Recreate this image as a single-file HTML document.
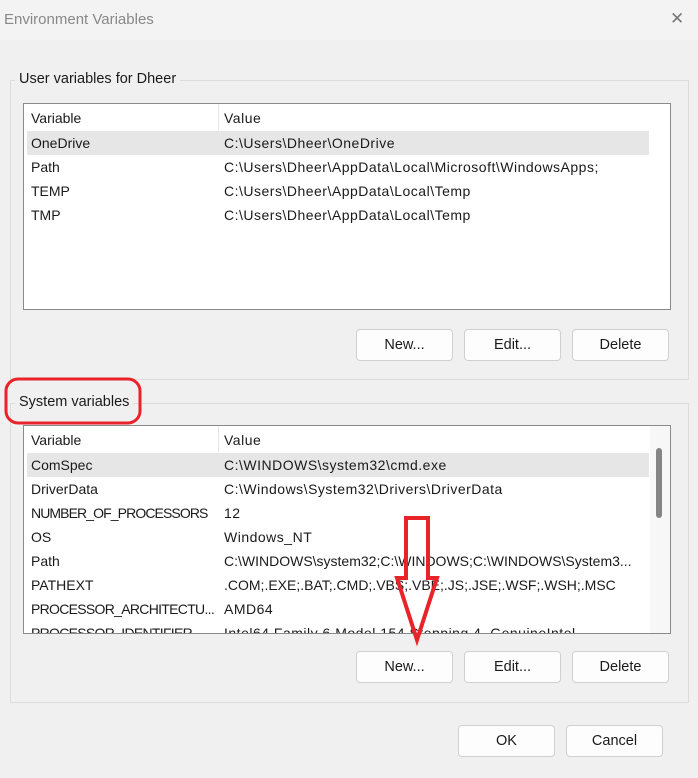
<!DOCTYPE html>
<html><head><style>
body{margin:0;width:698px;height:778px;background:#f0f0f0;font-family:"Liberation Sans",sans-serif;font-size:14px;color:#1a1a1a;position:relative;overflow:hidden}
.a{position:absolute}
.box{position:absolute;border:1px solid #dcdcdc}
.list{position:absolute;background:#fff;border:1px solid #8a8a8a;overflow:hidden}
.row{position:absolute;left:3px;height:24px;line-height:24px;width:622px}
.row span{position:absolute;top:0;height:24px;line-height:24px;white-space:nowrap;overflow:hidden}
.row .v{left:4px;width:186px}.row .w{left:197px;font-size:14px;letter-spacing:0.5px;width:425px}
.btn{position:absolute;width:95px;height:30px;background:#fdfdfd;border:1px solid #d0d0d0;border-radius:4px;text-align:center;line-height:30px;font-size:14.5px}
</style></head><body>
<div class="a" style="left:0;top:0;width:698px;height:40px;background:#f3f3f3"></div>
<div class="a" style="left:4px;top:11px;color:#888;font-size:15px">Environment Variables</div>
<div class="a" style="left:670px;top:9px;color:#777;font-size:17px">✕</div>

<div class="box" style="left:10px;top:80px;width:677px;height:298px"></div>
<div class="a" style="left:15px;top:71px;background:#f0f0f0;padding:0 4px;font-size:14.5px">User variables for Dheer</div>
<div class="list" style="left:23px;top:103px;width:646px;height:205px">
<div class="a" style="left:194px;top:0;width:1px;height:26px;background:#e5e5e5"></div>
<div class="row" style="top:2px"><span class="v">Variable</span><span class="w">Value</span></div>
<div class="row" style="top:27px;background:#e6e6e6"><span class="v">OneDrive</span><span class="w">C:\Users\Dheer\OneDrive</span></div>
<div class="row" style="top:51px"><span class="v">Path</span><span class="w">C:\Users\Dheer\AppData\Local\Microsoft\WindowsApps;</span></div>
<div class="row" style="top:75px"><span class="v">TEMP</span><span class="w">C:\Users\Dheer\AppData\Local\Temp</span></div>
<div class="row" style="top:99px"><span class="v">TMP</span><span class="w">C:\Users\Dheer\AppData\Local\Temp</span></div>
</div>
<div class="btn" style="left:356px;top:329px">New...</div>
<div class="btn" style="left:464px;top:329px">Edit...</div>
<div class="btn" style="left:572px;top:329px">Delete</div>

<div class="box" style="left:10px;top:403px;width:677px;height:298px"></div>
<div class="a" style="left:15px;top:394px;background:#f0f0f0;padding:0 4px;font-size:14.5px">System variables</div>
<div class="list" style="left:23px;top:425px;width:646px;height:207px">
<div class="a" style="left:194px;top:0;width:1px;height:26px;background:#e5e5e5"></div>
<div class="a" style="left:626px;top:0;width:20px;height:207px;background:#f7f7f7"></div>
<div class="a" style="left:632px;top:22px;width:6px;height:70px;background:#858585;border-radius:3px"></div>
<div class="row" style="top:2px"><span class="v">Variable</span><span class="w">Value</span></div>
<div class="row" style="top:27px;background:#e6e6e6"><span class="v">ComSpec</span><span class="w">C:\WINDOWS\system32\cmd.exe</span></div>
<div class="row" style="top:51px"><span class="v">DriverData</span><span class="w">C:\Windows\System32\Drivers\DriverData</span></div>
<div class="row" style="top:75px"><span class="v" style="letter-spacing:-0.9px">NUMBER_OF_PROCESSORS</span><span class="w">12</span></div>
<div class="row" style="top:99px"><span class="v">OS</span><span class="w">Windows_NT</span></div>
<div class="row" style="top:123px"><span class="v">Path</span><span class="w" style="letter-spacing:0">C:\WINDOWS\system32;C:\WINDOWS;C:\WINDOWS\System3...</span></div>
<div class="row" style="top:147px"><span class="v">PATHEXT</span><span class="w" style="letter-spacing:0">.COM;.EXE;.BAT;.CMD;.VBS;.VBE;.JS;.JSE;.WSF;.WSH;.MSC</span></div>
<div class="row" style="top:171px"><span class="v" style="letter-spacing:-0.7px">PROCESSOR_ARCHITECTU...</span><span class="w">AMD64</span></div>
<div class="row" style="top:195px"><span class="v" style="letter-spacing:-0.7px">PROCESSOR_IDENTIFIER</span><span class="w">Intel64 Family 6 Model 154 Stepping 4, GenuineIntel</span></div>
</div>
<div class="btn" style="left:356px;top:651px">New...</div>
<div class="btn" style="left:464px;top:651px">Edit...</div>
<div class="btn" style="left:572px;top:651px">Delete</div>

<div class="btn" style="left:458px;top:725px">OK</div>
<div class="btn" style="left:566px;top:725px">Cancel</div>

<svg class="a" style="left:0;top:0" width="698" height="778">
<rect x="6" y="379" width="134" height="44" rx="12" fill="none" stroke="#e8242a" stroke-width="3"/>
<path d="M406 518 H428 V578 H437 L417 640 L397 578 H406 Z" fill="none" stroke="#e8242a" stroke-width="4" stroke-linejoin="miter"/>
</svg>
</body></html>
